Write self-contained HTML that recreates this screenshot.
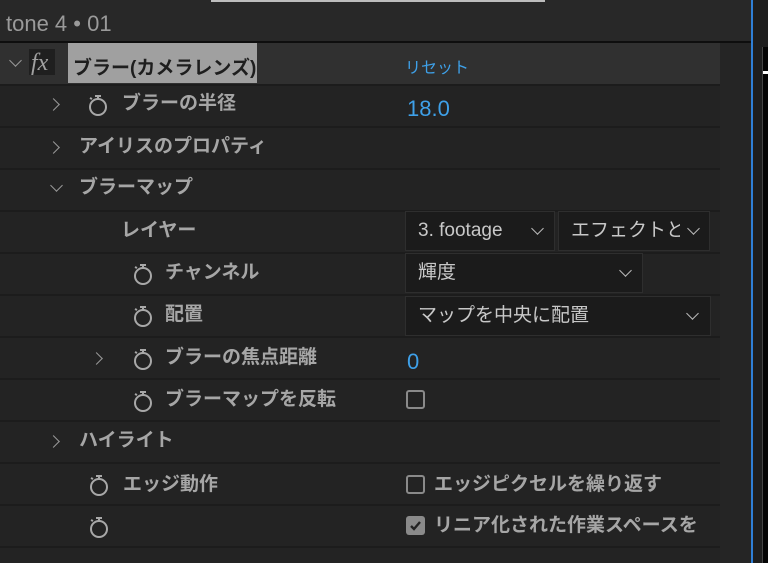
<!DOCTYPE html>
<html style="overflow:hidden;height:563px"><head><meta charset="utf-8"><style>
body{margin:0;width:768px;height:563px;background:#232323;overflow:hidden;position:relative;font-family:"Liberation Sans","Noto Sans CJK JP",sans-serif;}
.a{position:absolute;}
.t{position:absolute;color:#a6a6a6;font-size:19px;font-weight:bold;line-height:22px;white-space:nowrap;}
.row{position:absolute;left:0;width:720px;height:40px;background:#232323;border-top:2px solid #1c1c1c;}
.sw{position:absolute;width:22px;height:24px;}
.dd{position:absolute;background:#1b1b1b;border:1px solid #2e2e2e;box-sizing:border-box;color:#c8c8c8;font-size:19px;line-height:22px;padding:8px 0 0 12px;white-space:nowrap;overflow:hidden;}
.chev{position:absolute;width:8px;height:8px;border-right:1.6px solid #bbb;border-bottom:1.6px solid #bbb;transform:rotate(45deg);}
.rt{position:absolute;width:8px;height:8px;border-right:1.6px solid #999;border-bottom:1.6px solid #999;transform:rotate(-45deg);}
.dn{position:absolute;width:8px;height:8px;border-right:1.6px solid #999;border-bottom:1.6px solid #999;transform:rotate(45deg);}
.cb{position:absolute;width:19px;height:19px;border:2px solid #8a8a8a;border-radius:3px;box-sizing:border-box;}
.blue{color:#3ea0e8;}
</style></head><body>
<div class="a" style="left:0;top:0;width:768px;height:41px;background:#282828"></div>
<div class="a" style="left:211px;top:0;width:334px;height:2px;background:#bdbdbd"></div>
<div class="t" style="left:6px;top:11px;color:#9a9a9a;font-weight:normal;font-size:22px;line-height:26px">tone 4 • 01</div>
<div class="a" style="left:0;top:41px;width:752px;height:2px;background:#0e0e0e"></div>
<div class="a" style="left:0;top:43px;width:720px;height:41px;background:#303030"></div>
<div class="a" style="left:720px;top:43px;width:32px;height:520px;background:#252525"></div>
<div class="dn" style="left:11px;top:56px"></div>
<div class="a" style="left:29px;top:49px;width:26px;height:26px;background:#1f1f1f"></div>
<div class="t" style="left:31px;top:50px;font-family:'Liberation Serif',serif;font-style:italic;font-weight:normal;font-size:24px;line-height:26px;color:#a0a0a0">fx</div>
<div class="a" style="left:68px;top:43px;width:189px;height:40px;background:#a0a0a0"></div>
<div class="t" style="left:73px;top:58px;color:#1e1e1e">ブラー(カメラレンズ)</div>
<div class="t blue" style="left:405px;top:58px;font-size:16px;font-weight:normal">リセット</div>

<div class="row" style="top:84px"></div>
<div class="row" style="top:126px"></div>
<div class="row" style="top:168px"></div>
<div class="row" style="top:210px"></div>
<div class="row" style="top:252px"></div>
<div class="row" style="top:294px"></div>
<div class="row" style="top:336px"></div>
<div class="row" style="top:378px"></div>
<div class="row" style="top:420px"></div>
<div class="row" style="top:462px"></div>
<div class="row" style="top:504px"></div>
<div class="row" style="top:546px;height:15px"></div>

<div class="rt" style="left:49px;top:100px"></div>
<svg class="sw" style="left:87px;top:93px" viewBox="0 0 22 24"><circle cx="11" cy="14" r="8" fill="none" stroke="#a8a8a8" stroke-width="2"/><path d="M8 3h6M11 3v3M5 6l-2-1" stroke="#a8a8a8" stroke-width="2" fill="none"/></svg>
<div class="t" style="left:122px;top:93px">ブラーの半径</div>
<div class="t blue" style="left:407px;top:96px;font-size:22px;font-weight:normal;line-height:26px">18.0</div>

<div class="rt" style="left:49px;top:143px"></div>
<div class="t" style="left:79px;top:136px">アイリスのプロパティ</div>
<div class="dn" style="left:52px;top:181px"></div>
<div class="t" style="left:79px;top:177px">ブラーマップ</div>
<div class="t" style="left:121px;top:220px">レイヤー</div>
<div class="dd" style="left:405px;top:211px;width:150px;height:40px">3. footage</div><div class="chev" style="left:533px;top:224px"></div>
<div class="dd" style="left:558px;top:211px;width:152px;height:40px">エフェクトと</div><div class="a" style="left:680px;top:212px;width:28px;height:38px;background:#1b1b1b"></div><div class="chev" style="left:689px;top:224px"></div>

<svg class="sw" style="left:132px;top:262px" viewBox="0 0 22 24"><circle cx="11" cy="14" r="8" fill="none" stroke="#a8a8a8" stroke-width="2"/><path d="M8 3h6M11 3v3M5 6l-2-1" stroke="#a8a8a8" stroke-width="2" fill="none"/></svg>
<div class="t" style="left:165px;top:262px">チャンネル</div>
<div class="dd" style="left:405px;top:253px;width:238px;height:40px">輝度</div><div class="chev" style="left:621px;top:266px"></div>

<svg class="sw" style="left:132px;top:304px" viewBox="0 0 22 24"><circle cx="11" cy="14" r="8" fill="none" stroke="#a8a8a8" stroke-width="2"/><path d="M8 3h6M11 3v3M5 6l-2-1" stroke="#a8a8a8" stroke-width="2" fill="none"/></svg>
<div class="t" style="left:165px;top:304px">配置</div>
<div class="dd" style="left:405px;top:296px;width:306px;height:40px">マップを中央に配置</div><div class="chev" style="left:688px;top:309px"></div>

<div class="rt" style="left:92px;top:354px"></div>
<svg class="sw" style="left:132px;top:347px" viewBox="0 0 22 24"><circle cx="11" cy="14" r="8" fill="none" stroke="#a8a8a8" stroke-width="2"/><path d="M8 3h6M11 3v3M5 6l-2-1" stroke="#a8a8a8" stroke-width="2" fill="none"/></svg>
<div class="t" style="left:165px;top:347px">ブラーの焦点距離</div>
<div class="t blue" style="left:407px;top:349px;font-size:22px;font-weight:normal;line-height:26px">0</div>

<svg class="sw" style="left:132px;top:389px" viewBox="0 0 22 24"><circle cx="11" cy="14" r="8" fill="none" stroke="#a8a8a8" stroke-width="2"/><path d="M8 3h6M11 3v3M5 6l-2-1" stroke="#a8a8a8" stroke-width="2" fill="none"/></svg>
<div class="t" style="left:165px;top:389px">ブラーマップを反転</div>
<div class="cb" style="left:406px;top:390px"></div>

<div class="rt" style="left:49px;top:437px"></div>
<div class="t" style="left:79px;top:430px">ハイライト</div>

<svg class="sw" style="left:88px;top:473px" viewBox="0 0 22 24"><circle cx="11" cy="14" r="8" fill="none" stroke="#a8a8a8" stroke-width="2"/><path d="M8 3h6M11 3v3M5 6l-2-1" stroke="#a8a8a8" stroke-width="2" fill="none"/></svg>
<div class="t" style="left:123px;top:474px">エッジ動作</div>
<div class="cb" style="left:406px;top:475px"></div>
<div class="t" style="left:434px;top:474px">エッジピクセルを繰り返す</div>

<svg class="sw" style="left:88px;top:515px" viewBox="0 0 22 24"><circle cx="11" cy="14" r="8" fill="none" stroke="#a8a8a8" stroke-width="2"/><path d="M8 3h6M11 3v3M5 6l-2-1" stroke="#a8a8a8" stroke-width="2" fill="none"/></svg>
<svg class="a" style="left:406px;top:516px" width="19" height="19" viewBox="0 0 19 19"><rect width="19" height="19" rx="3" fill="#8a8a8a"/><path d="M5 10l3 3 6-7" stroke="#232323" stroke-width="2.4" fill="none"/></svg>
<div class="t" style="left:434px;top:515px">リニア化された作業スペースを</div>

<div class="a" style="left:751px;top:0;width:2px;height:563px;background:#2f7fd6"></div>
<div class="a" style="left:753px;top:0;width:15px;height:563px;background:#1e1e1e"></div>
<div class="a" style="left:762px;top:47px;width:6px;height:516px;background:#050505;border-left:1px solid #444"></div>
<div class="a" style="left:763px;top:71px;width:5px;height:3px;background:#fff"></div>
</body></html>
